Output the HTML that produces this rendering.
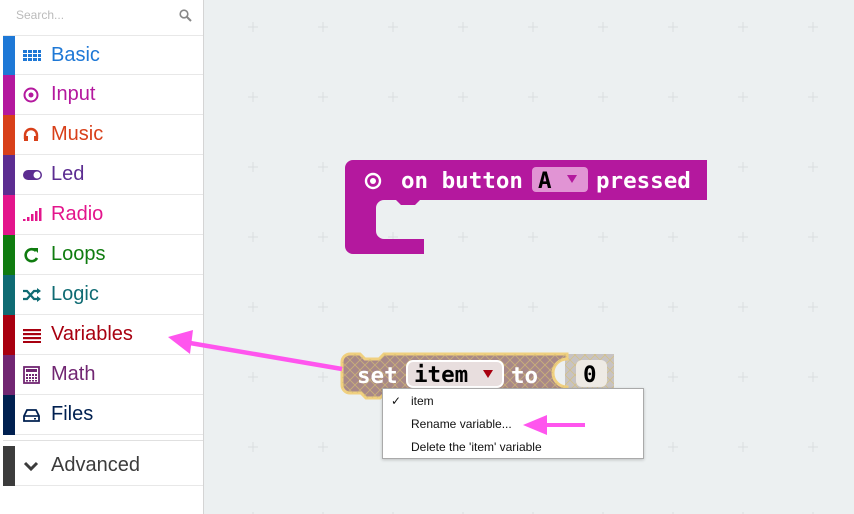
<!DOCTYPE html>
<html><head><meta charset="utf-8"><style>
*{margin:0;padding:0;box-sizing:border-box}
body{width:854px;height:514px;overflow:hidden;background:#ecf0f1;font-family:"Liberation Sans",sans-serif;position:relative}
#side{position:absolute;left:0;top:0;width:204px;height:514px;background:#fff;border-right:1px solid #d4d4d4}
.search{position:absolute;left:16px;top:8px;font-size:12px;color:#bbb}
.row{position:absolute;left:3px;width:200px;height:40px;border-bottom:1px solid #e8e8e8}
.row .st{position:absolute;left:0;top:0;width:12px;height:40px}
.row .ic{position:absolute;left:19px;top:11px;width:20px;height:18px}
.row .tx{position:absolute;left:48px;top:8px;font-size:20px}
.mono{font-family:"DejaVu Sans Mono","Liberation Mono",monospace;font-weight:bold}
</style></head><body>
<svg style="position:absolute;left:0;top:0" width="854" height="514">
<defs><pattern id="g" x="-7" y="-3" width="70" height="70" patternUnits="userSpaceOnUse">
<path d="M45 30h10M50 25v10" stroke="#dadedf" stroke-width="1"/></pattern></defs>
<rect x="204" y="0" width="650" height="514" fill="url(#g)"/>
</svg>
<div id="side">
<div class="search">Search...</div>
<svg style="position:absolute;left:179px;top:9px" width="13" height="13"><circle cx="5" cy="5" r="3.8" fill="none" stroke="#888" stroke-width="1.6"/><path d="M8 8l4 4" stroke="#888" stroke-width="2"/></svg>
<div class="row" style="top:35px;border-top:1px solid #e8e8e8"><div class="st" style="background:#1e78d6"></div>
<svg class="ic" viewBox="0 0 20 18"><g fill="#1e78d6"><rect x="1" y="3" width="4" height="3"/><rect x="6" y="3" width="4" height="3"/><rect x="11" y="3" width="4" height="3"/><rect x="16" y="3" width="3" height="3"/><rect x="1" y="7" width="4" height="3"/><rect x="6" y="7" width="4" height="3"/><rect x="11" y="7" width="4" height="3"/><rect x="16" y="7" width="3" height="3"/><rect x="1" y="11" width="4" height="3"/><rect x="6" y="11" width="4" height="3"/><rect x="11" y="11" width="4" height="3"/><rect x="16" y="11" width="3" height="3"/></g></svg>
<div class="tx" style="color:#1e78d6">Basic</div></div>
<div class="row" style="top:75px"><div class="st" style="background:#b4189e"></div>
<svg class="ic" viewBox="0 0 20 18"><circle cx="9" cy="9" r="6.5" fill="none" stroke="#b4189e" stroke-width="2"/><circle cx="9" cy="9" r="2.5" fill="#b4189e"/></svg>
<div class="tx" style="color:#b4189e">Input</div></div>
<div class="row" style="top:115px"><div class="st" style="background:#d8401a"></div>
<svg class="ic" viewBox="0 0 20 18"><path d="M3 13V9a6 6 0 0 1 12 0v4" fill="none" stroke="#d8401a" stroke-width="2.4"/><rect x="2" y="10" width="4" height="5" fill="#d8401a"/><rect x="12" y="10" width="4" height="5" fill="#d8401a"/></svg>
<div class="tx" style="color:#d8401a">Music</div></div>
<div class="row" style="top:155px"><div class="st" style="background:#5c2d91"></div>
<svg class="ic" viewBox="0 0 20 18"><rect x="1" y="4" width="19" height="10" rx="5" fill="#5c2d91"/><circle cx="15" cy="9" r="3.5" fill="#fff"/></svg>
<div class="tx" style="color:#5c2d91">Led</div></div>
<div class="row" style="top:195px"><div class="st" style="background:#e3158c"></div>
<svg class="ic" viewBox="0 0 20 18"><g fill="#e3158c"><rect x="1" y="13" width="2.5" height="2"/><rect x="5" y="11" width="2.5" height="4"/><rect x="9" y="8" width="2.5" height="7"/><rect x="13" y="5" width="2.5" height="10"/><rect x="17" y="2" width="2.5" height="13"/></g></svg>
<div class="tx" style="color:#e3158c">Radio</div></div>
<div class="row" style="top:235px"><div class="st" style="background:#107c10"></div>
<svg class="ic" viewBox="0 0 20 18"><path d="M14 5A6 6 0 1 0 15 12" fill="none" stroke="#107c10" stroke-width="2.6"/><path d="M11 2h5v5z" fill="#107c10"/></svg>
<div class="tx" style="color:#107c10">Loops</div></div>
<div class="row" style="top:275px"><div class="st" style="background:#0f6b73"></div>
<svg class="ic" viewBox="0 0 20 18"><path d="M1 5h4l7 8h4M1 13h4l7-8h4" fill="none" stroke="#0f6b73" stroke-width="2.2"/><path d="M15 2l4 3-4 3zM15 10l4 3-4 3z" fill="#0f6b73"/></svg>
<div class="tx" style="color:#0f6b73">Logic</div></div>
<div class="row" style="top:315px"><div class="st" style="background:#a80010"></div>
<svg class="ic" viewBox="0 0 20 18"><g fill="#a80010"><rect x="1" y="3" width="18" height="2.2"/><rect x="1" y="7" width="18" height="2.2"/><rect x="1" y="11" width="18" height="2.2"/><rect x="1" y="15" width="18" height="2"/></g></svg>
<div class="tx" style="color:#a80010">Variables</div></div>
<div class="row" style="top:355px"><div class="st" style="background:#712672"></div>
<svg class="ic" viewBox="0 0 20 18"><rect x="2" y="1" width="15" height="16" fill="none" stroke="#712672" stroke-width="1.8"/><rect x="4" y="3" width="11" height="3" fill="#712672"/><g fill="#712672"><rect x="4" y="8" width="2" height="2"/><rect x="7" y="8" width="2" height="2"/><rect x="10" y="8" width="2" height="2"/><rect x="13" y="8" width="2" height="2"/><rect x="4" y="11" width="2" height="2"/><rect x="7" y="11" width="2" height="2"/><rect x="10" y="11" width="2" height="2"/><rect x="13" y="11" width="2" height="2"/><rect x="4" y="14" width="2" height="1.5"/><rect x="7" y="14" width="2" height="1.5"/><rect x="10" y="14" width="2" height="1.5"/><rect x="13" y="14" width="2" height="1.5"/></g></svg>
<div class="tx" style="color:#712672">Math</div></div>
<div class="row" style="top:395px"><div class="st" style="background:#002050"></div>
<svg class="ic" viewBox="0 0 20 18"><path d="M2 10l3-6h9l3 6v5H2z" fill="none" stroke="#002050" stroke-width="1.8"/><path d="M2 10h15" stroke="#002050" stroke-width="1.6"/><rect x="12" y="12" width="2" height="1.5" fill="#002050"/></svg>
<div class="tx" style="color:#002050">Files</div></div>
<div style="position:absolute;left:3px;top:440px;width:200px;border-top:1px solid #e0e0e0"></div>
<div class="row" style="top:446px"><div class="st" style="background:#3c3c3c"></div>
<svg class="ic" viewBox="0 0 20 18"><path d="M3 6l6 6 6-6" fill="none" stroke="#3c3c3c" stroke-width="3"/></svg>
<div class="tx" style="color:#3c3c3c">Advanced</div></div>
</div>

<svg style="position:absolute;left:0;top:0" width="854" height="514">
<path d="M353 160H707V200H420l-5 5h-14l-5-5h-12a8 8 0 0 0-8 8v23a8 8 0 0 0 8 8h40v15H353a8 8 0 0 1-8-8V168a8 8 0 0 1 8-8z" fill="#b4189e"/>
<circle cx="373" cy="181" r="7" fill="none" stroke="#fff" stroke-width="2.4"/><circle cx="373" cy="181" r="3" fill="#fff"/>
<text x="401" y="188" class="mono" font-size="22.5" fill="#fff">on button</text>
<rect x="532" y="167" width="56" height="25" rx="4" fill="#e194d4"/>
<text x="538" y="188" class="mono" font-size="22.5" fill="#000">A</text>
<path d="M567 175h10l-5 8z" fill="#b4189e"/>
<text x="596" y="188" class="mono" font-size="22.5" fill="#fff">pressed</text>
<defs><pattern id="x" width="10" height="10" patternUnits="userSpaceOnUse"><path d="M0 0l10 10M10 0L0 10" stroke="#d8c070" stroke-width="0.8" opacity=".7"/></pattern></defs>
<rect x="565" y="354" width="49" height="39" fill="#c7c3c3"/>
<rect x="565" y="354" width="49" height="39" fill="url(#x)"/>
<path d="M350 354h10l5 5h14l5-5h183v5a6 6 0 0 0 0 28v6H385l-5 5h-14l-5-5h-11a8 8 0 0 1-8-8v-23a8 8 0 0 1 8-8z" fill="#a88888" stroke="#f0d080" stroke-width="3"/>
<path d="M350 354h10l5 5h14l5-5h183v5a6 6 0 0 0 0 28v6H385l-5 5h-14l-5-5h-11a8 8 0 0 1-8-8v-23a8 8 0 0 1 8-8z" fill="url(#x)"/>
<text x="357" y="383" class="mono" font-size="22.5" fill="#fff">set</text>
<rect x="407" y="361" width="96" height="26" rx="6" fill="#e8dede" stroke="#fff" stroke-width="2"/>
<text x="414" y="382" class="mono" font-size="22.5" fill="#000">item</text>
<path d="M483 370h10l-5 8z" fill="#a80010"/>
<text x="511" y="383" class="mono" font-size="22.5" fill="#fff">to</text>
<rect x="576" y="360" width="31" height="27" rx="6" fill="#eeeae4"/>
<text x="583" y="382" class="mono" font-size="22.5" fill="#000">0</text>
<path d="M342 369L190 343" stroke="#ff55ee" stroke-width="4.5"/>
<path d="M168 337l25-7-3 24z" fill="#ff55ee"/>
</svg>
<div style="position:absolute;left:382px;top:388px;width:262px;height:71px;background:#fff;border:1px solid #aaa;box-shadow:0 1px 3px rgba(0,0,0,.2);font-size:12px;color:#111">
<div style="position:absolute;left:8px;top:5px">✓</div>
<div style="position:absolute;left:28px;top:5px">item</div>
<div style="position:absolute;left:28px;top:28px">Rename variable...</div>
<div style="position:absolute;left:28px;top:51px">Delete the 'item' variable</div>
</div>
<svg style="position:absolute;left:0;top:0" width="854" height="514">
<path d="M585 425H545" stroke="#ff55ee" stroke-width="4"/>
<path d="M523 425l24-10v20z" fill="#ff55ee"/>
</svg>
</body></html>
